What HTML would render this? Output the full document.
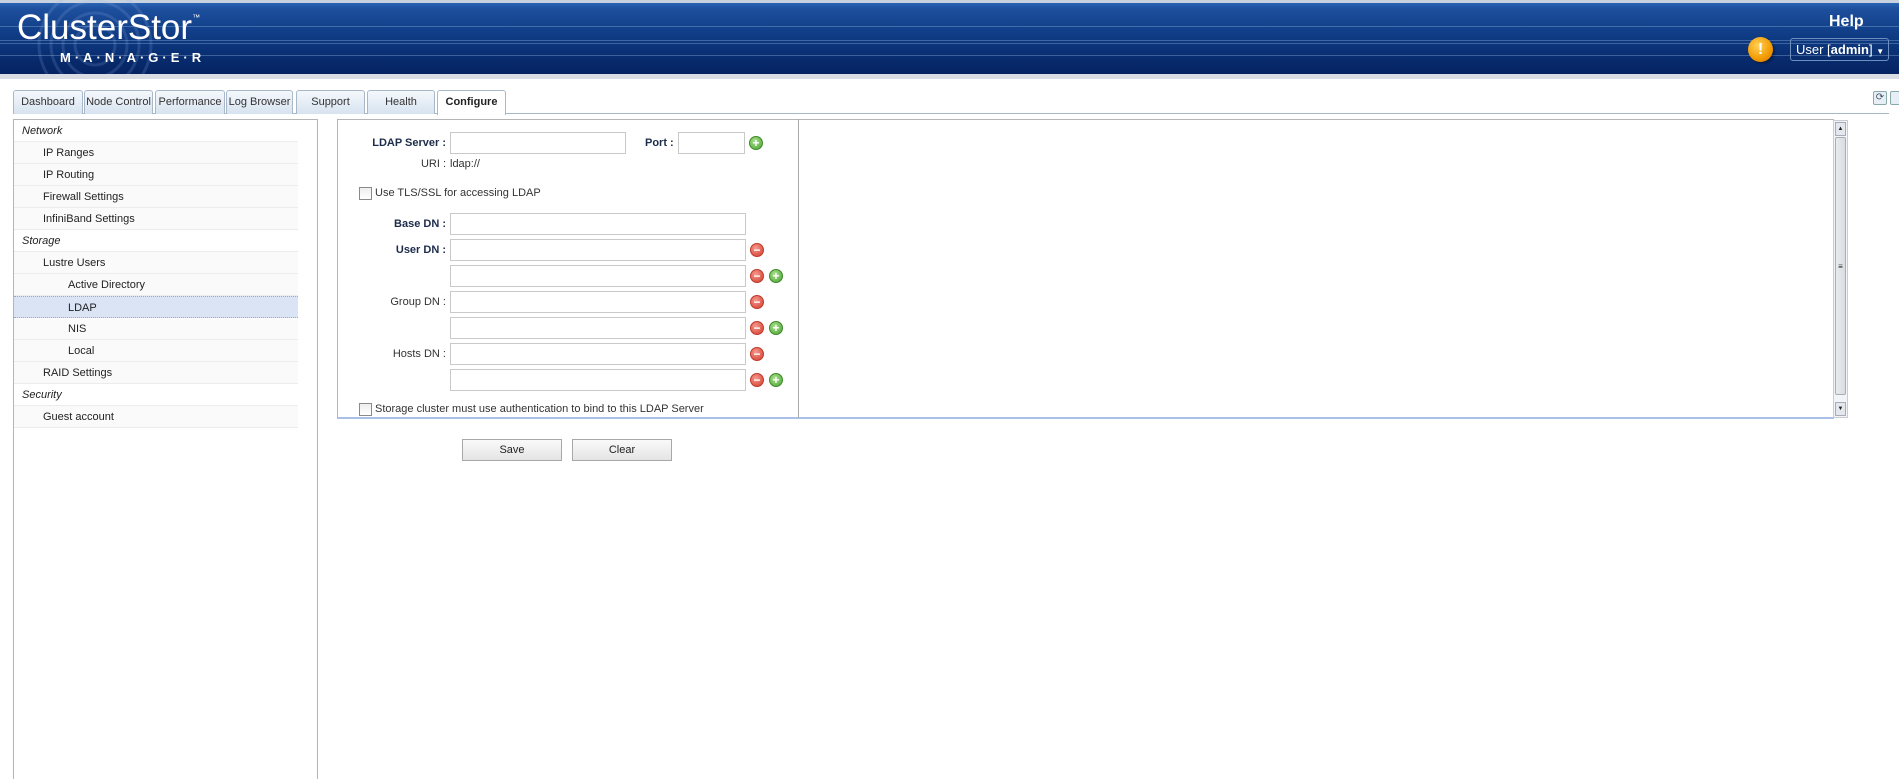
<!DOCTYPE html>
<html><head><meta charset="utf-8"><style>
*{box-sizing:border-box;margin:0;padding:0}
body{width:1899px;height:772px;position:relative;background:#fff;font-family:"Liberation Sans",Arial,sans-serif;font-size:11px;color:#222;overflow:hidden}
.abs{position:absolute}
#hdr{left:0;top:0;width:1899px;height:74px;background:linear-gradient(#2a63b4 0px,#1d4f9d 6px,#0e3a82 35px,#07296a 60px,#062260 74px);border-top:3px solid #c9d3e0}
.stripe{position:absolute;left:0;width:1899px;height:1px;background:rgba(160,190,230,.35)}
#band{left:0;top:74px;width:1899px;height:5px;background:#d9dde3}
.tab{position:absolute;top:90px;height:24px;border:1px solid #a9b8c9;border-bottom:none;border-radius:3px 3px 0 0;background:linear-gradient(#f4f8fc,#d7e3f0);text-align:center;line-height:23px;font-size:11px;color:#333}
.tab.act{background:#fff;font-weight:bold;height:25px;color:#222}
#tabline{left:13px;top:113px;width:1876px;height:1px;background:#a9b8c9}
#side{left:13px;top:119px;width:305px;height:660px;border:1px solid #b5b5b5;border-bottom:none}
.row{position:absolute;left:0;width:284px;height:22px;line-height:22px;border-bottom:1px solid #ececec;background:#fafafa;font-size:11px;color:#222}
.row.cat{font-style:italic;background:#fff}
.row.sel{background:#dbe4f5;border-top:1px dotted #9aa8c2;border-bottom:1px dotted #9aa8c2}
#form{left:337px;top:119px;width:1497px;height:300px;border:1px solid #b5b5b5;border-right:1px solid #aac0e6;border-bottom:2px solid #aac0e6}
#div{left:798px;top:119px;width:1px;height:299px;background:#aaa}
.lbl{position:absolute;text-align:right;width:110px;left:336px;font-size:11px;color:#333}
.b{font-weight:bold;color:#1d2c4a}
.inp{position:absolute;height:22px;border:1px solid #c9c9c9;background:#fff}
.ic{position:absolute;width:14px;height:14px;border-radius:50%;color:#fff;font-weight:bold;font-size:12px;line-height:13px;text-align:center}
.minus{background:radial-gradient(circle at 40% 35%,#f59a8e,#d3392b);border:1px solid #c0392b}
.plus{background:radial-gradient(circle at 40% 35%,#a8e08e,#4aa12f);border:1px solid #3c8a26}
.cb{position:absolute;width:13px;height:13px;border:1px solid #8a8a8a;background:linear-gradient(#eee,#fff)}
.btn{position:absolute;top:439px;height:22px;border:1px solid #a8a8a8;background:linear-gradient(#fafafa,#e4e4e4);text-align:center;line-height:20px;font-size:11px}
</style></head><body>
<div id="hdr" class="abs">
<div class="stripe" style="top:23px"></div><div class="stripe" style="top:37px"></div><div class="stripe" style="top:40px"></div><div class="stripe" style="top:52px"></div>
<svg class="abs" style="left:0;top:-3px" width="240" height="77"><g fill="none" stroke="rgba(150,180,230,.18)" stroke-width="3"><circle cx="95" cy="45" r="20"/><circle cx="95" cy="45" r="32"/><circle cx="95" cy="45" r="44"/><circle cx="95" cy="45" r="56"/></g></svg>
<div class="abs" style="left:17px;top:5px;color:#fff;font-size:35px;font-family:'Liberation Sans',sans-serif">ClusterStor<span style="font-size:8px;vertical-align:top;position:relative;top:5px">™</span></div>
<div class="abs" style="left:60px;top:47px;color:#fff;font-size:13px;font-weight:bold;letter-spacing:4px">M·A·N·A·G·E·R</div>
<div class="abs" style="left:1829px;top:10px;color:#fff;font-size:16px;font-weight:bold">Help</div>
<div class="abs" style="left:1748px;top:34px;width:25px;height:25px;border-radius:50%;background:radial-gradient(circle at 40% 35%,#ffd15a,#f29a00 60%,#d06a00);box-shadow:2px 2px 2px rgba(0,0,0,.3);color:#fff;font-weight:bold;text-align:center;line-height:25px;font-size:16px">!</div>
<div class="abs" style="left:1790px;top:35px;width:99px;height:23px;border:1px solid #6f8fc0;border-radius:3px;color:#fff;font-size:13px;line-height:21px;padding-left:5px">User [<b>admin</b>] <span style="font-size:8px">▼</span></div>
</div>
<div id="band" class="abs"></div>
<div class="abs" style="left:1873px;top:91px;width:14px;height:14px;border:1px solid #8aa;border-radius:2px;background:#e8eef5;font-size:10px;text-align:center;line-height:12px;color:#456">⟳</div>
<div class="abs" style="left:1890px;top:91px;width:14px;height:14px;border:1px solid #8aa;border-radius:2px;background:#e8eef5"></div>
<div id="tabline" class="abs"></div>
<div class="tab" style="left:13px;width:70px">Dashboard</div>
<div class="tab" style="left:84px;width:69px">Node Control</div>
<div class="tab" style="left:155px;width:70px">Performance</div>
<div class="tab" style="left:226px;width:67px">Log Browser</div>
<div class="tab" style="left:296px;width:69px">Support</div>
<div class="tab" style="left:367px;width:68px">Health</div>
<div class="tab act" style="left:437px;width:69px">Configure</div>
<div id="side" class="abs">
<div class="row cat" style="top:0;padding-left:8px">Network</div>
<div class="row" style="top:22px;padding-left:29px">IP Ranges</div>
<div class="row" style="top:44px;padding-left:29px">IP Routing</div>
<div class="row" style="top:66px;padding-left:29px">Firewall Settings</div>
<div class="row" style="top:88px;padding-left:29px">InfiniBand Settings</div>
<div class="row cat" style="top:110px;padding-left:8px">Storage</div>
<div class="row" style="top:132px;padding-left:29px">Lustre Users</div>
<div class="row" style="top:154px;padding-left:54px">Active Directory</div>
<div class="row sel" style="top:176px;padding-left:54px">LDAP</div>
<div class="row" style="top:198px;padding-left:54px">NIS</div>
<div class="row" style="top:220px;padding-left:54px">Local</div>
<div class="row" style="top:242px;padding-left:29px">RAID Settings</div>
<div class="row cat" style="top:264px;padding-left:8px">Security</div>
<div class="row" style="top:286px;padding-left:29px">Guest account</div>
</div>
<div id="form" class="abs"></div>
<div id="div" class="abs"></div>
<div class="abs" style="left:1833px;top:120px;width:15px;height:298px;background:#f2f4f7;border:1px solid #c8cdd4">
<div style="position:absolute;left:1px;top:1px;width:11px;height:14px;background:#e4e7eb;border:1px solid #aab;font-size:6px;text-align:center;line-height:12px">▲</div>
<div style="position:absolute;left:1px;top:16px;width:11px;height:258px;background:linear-gradient(90deg,#e9ebee,#d9dce1);border:1px solid #a9aeb6;border-radius:2px;text-align:center;line-height:258px;font-size:8px">≡</div>
<div style="position:absolute;left:1px;bottom:1px;width:11px;height:14px;background:#e4e7eb;border:1px solid #aab;font-size:6px;text-align:center;line-height:12px">▼</div>
</div>
<div class="lbl b" style="top:137px">LDAP Server :</div>
<div class="inp" style="left:450px;top:132px;width:176px"></div>
<div class="abs b" style="left:645px;top:137px">Port :</div>
<div class="inp" style="left:678px;top:132px;width:67px"></div>
<div class="ic plus" style="left:749px;top:136px">+</div>
<div class="lbl" style="top:158px">URI :</div>
<div class="abs" style="left:450px;top:158px;color:#333">ldap://</div>
<div class="cb" style="left:359px;top:187px"></div>
<div class="abs" style="left:375px;top:187px;color:#333">Use TLS/SSL for accessing LDAP</div>
<div class="lbl b" style="top:218px">Base DN :</div>
<div class="inp" style="left:450px;top:213px;width:296px"></div>
<div class="lbl b" style="top:244px">User DN :</div>
<div class="inp" style="left:450px;top:239px;width:296px"></div><div class="ic minus" style="left:750px;top:243px">−</div>
<div class="inp" style="left:450px;top:265px;width:296px"></div><div class="ic minus" style="left:750px;top:269px">−</div><div class="ic plus" style="left:769px;top:269px">+</div>
<div class="lbl" style="top:296px">Group DN :</div>
<div class="inp" style="left:450px;top:291px;width:296px"></div><div class="ic minus" style="left:750px;top:295px">−</div>
<div class="inp" style="left:450px;top:317px;width:296px"></div><div class="ic minus" style="left:750px;top:321px">−</div><div class="ic plus" style="left:769px;top:321px">+</div>
<div class="lbl" style="top:348px">Hosts DN :</div>
<div class="inp" style="left:450px;top:343px;width:296px"></div><div class="ic minus" style="left:750px;top:347px">−</div>
<div class="inp" style="left:450px;top:369px;width:296px"></div><div class="ic minus" style="left:750px;top:373px">−</div><div class="ic plus" style="left:769px;top:373px">+</div>
<div class="cb" style="left:359px;top:403px"></div>
<div class="abs" style="left:375px;top:403px;color:#333">Storage cluster must use authentication to bind to this LDAP Server</div>
<div class="btn" style="left:462px;width:100px">Save</div>
<div class="btn" style="left:572px;width:100px">Clear</div>
</body></html>
